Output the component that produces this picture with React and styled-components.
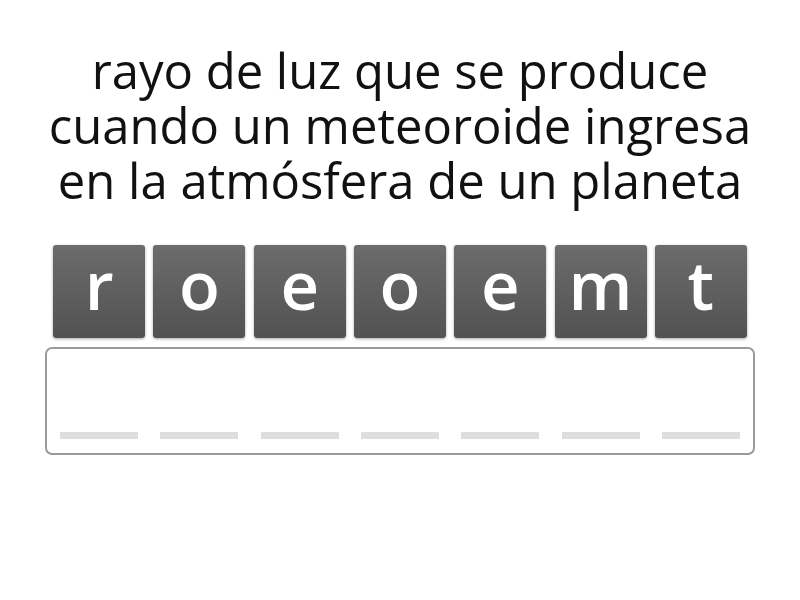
import React from "react"
import styled, { createGlobalStyle } from "styled-components"

const GlobalStyle = createGlobalStyle`
  html, body {
    margin: 0;
    padding: 0;
    background: #fff;
  }
  body {
    font-family: "Open Sans", "Noto Sans", sans-serif;
  }
`

const Page = styled.main`
  width: 800px;
  height: 600px;
  display: flex;
  flex-direction: column;
  align-items: center;
  padding-top: 43px;
  box-sizing: border-box;
`

const Question = styled.h1`
  margin: 0;
  width: 730px;
  font-size: 49px;
  font-weight: 400;
  line-height: 55px;
  color: #111;
  text-align: center;
`

const Board = styled.div`
  width: 710px;
  margin-top: 37px;
  display: flex;
  flex-direction: column;
  gap: 9px;
`

const Row = styled.div`
  display: grid;
  grid-template-columns: repeat(7, 1fr);
  padding: 0 4px;
`

const Tile = styled.div`
  justify-self: center;
  width: 92px;
  height: 93px;
  border-radius: 3px;
  background: linear-gradient(to bottom, #6c6c6c 0%, #5f5f5f 50%, #525252 100%);
  box-shadow: 0 1px 3px rgba(0, 0, 0, 0.35);
  color: #fff;
  font-size: 67px;
  font-weight: 600;
  line-height: 79px;
  text-align: center;
`

const AnswerBox = styled.div`
  height: 108px;
  border: 2px solid #9a9a9a;
  border-radius: 7px;
  box-sizing: border-box;
  display: grid;
  grid-template-columns: repeat(7, 1fr);
  align-items: end;
  padding: 0 2px 14px;
`

const Slot = styled.div`
  justify-self: center;
  width: 78px;
  height: 7px;
  background: #dedede;
`

const letters = ["r", "o", "e", "o", "e", "m", "t"]

const App = () => {
  return (
    <Page>
      <GlobalStyle />
      <Question>
        rayo de luz que se produce cuando un meteoroide ingresa en la
        atmósfera de un planeta
      </Question>
      <Board>
        <Row>
          {letters.map((l, i) => (
            <Tile key={i}>{l}</Tile>
          ))}
        </Row>
        <AnswerBox>
          {letters.map((_, i) => (
            <Slot key={i} />
          ))}
        </AnswerBox>
      </Board>
    </Page>
  )
}

export default App
